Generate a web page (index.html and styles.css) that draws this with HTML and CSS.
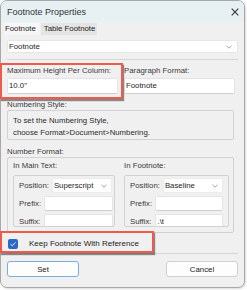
FILE: index.html
```html
<!DOCTYPE html>
<html>
<head>
<meta charset="utf-8">
<link rel="stylesheet" href="styles.css">
</head>
<body>
<div class="stage">
  <div class="dialog">
    <div class="titlebar">
      <span class="title">Footnote Properties</span>
      <svg class="close" width="8" height="8" viewBox="0 0 8 8"><path d="M0.7 0.7 L7.3 7.3 M7.3 0.7 L0.7 7.3" stroke="#3c3c3c" stroke-width="1.2" fill="none"/></svg>
    </div>
    <div class="tabs">
      <span class="tab active">Footnote</span>
      <span class="tab">Table Footnote</span>
    </div>
    <div class="content">
      <div class="select top-select">
        <span>Footnote</span>
        <svg class="chev" width="6" height="4" viewBox="0 0 6 4"><path d="M0.5 0.8 L3 3.2 L5.5 0.8" stroke="#8a8a8a" stroke-width="0.8" fill="none"/></svg>
      </div>
      <div class="sep"></div>
      <div class="two-col">
        <div class="field">
          <div class="label">Maximum Height Per Column:</div>
          <div class="input tall">10.0"</div>
        </div>
        <div class="field">
          <div class="label">Paragraph Format:</div>
          <div class="input tall">Footnote</div>
        </div>
      </div>
      <div class="label numbering-label">Numbering Style:</div>
      <div class="note-box">To set the Numbering Style,<br>choose Format&gt;Document&gt;Numbering.</div>
      <div class="label format-label">Number Format:</div>
      <div class="group">
        <div class="col">
          <div class="label">In Main Text:</div>
          <div class="inner inner-left">
            <div class="row"><span class="rlabel">Position:</span><div class="select small-select"><span>Superscript</span><svg class="chev" width="6" height="4" viewBox="0 0 6 4"><path d="M0.5 0.8 L3 3.2 L5.5 0.8" stroke="#8a8a8a" stroke-width="0.8" fill="none"/></svg></div></div>
            <div class="row"><span class="rlabel">Prefix:</span><div class="input small"></div></div>
            <div class="row"><span class="rlabel">Suffix:</span><div class="input small"></div></div>
          </div>
        </div>
        <div class="col">
          <div class="label">In Footnote:</div>
          <div class="inner inner-right">
            <div class="row"><span class="rlabel">Position:</span><div class="select small-select"><span>Baseline</span><svg class="chev" width="6" height="4" viewBox="0 0 6 4"><path d="M0.5 0.8 L3 3.2 L5.5 0.8" stroke="#8a8a8a" stroke-width="0.8" fill="none"/></svg></div></div>
            <div class="row"><span class="rlabel">Prefix:</span><div class="input small"></div></div>
            <div class="row"><span class="rlabel">Suffix:</span><div class="input small">.\t</div></div>
          </div>
        </div>
      </div>
      <div class="check-row">
        <span class="checkbox"><svg width="8" height="8" viewBox="0 0 8 8"><path d="M1.6 4.2 L3.3 5.8 L6.4 2.4" stroke="#ffffff" stroke-width="0.9" fill="none"/></svg></span>
        <span>Keep Footnote With Reference</span>
      </div>
      <div class="sep sep-bottom"></div>
      <div class="buttons">
        <button class="btn default">Set</button>
        <button class="btn">Cancel</button>
      </div>
    </div>
  </div>
  <div class="callout callout-height"></div>
  <div class="callout callout-keep"></div>
</div>
</body>
</html>
```
FILE: styles.css
```css
* { box-sizing: border-box; }
html, body { margin: 0; padding: 0; background: #ffffff; }
body {
  font-family: "Liberation Sans", Arial, sans-serif;
  font-size: 7.8px;
  color: #2b2b2b;
  width: 247px;
  height: 290px;
  overflow: hidden;
}
.stage { position: relative; width: 247px; height: 290px; }
.dialog {
  width: 245px;
  height: 288px;
  border: 1px solid #a9a9a9;
  border-radius: 7px;
  background: #f0f0f0;
  overflow: hidden;
  box-shadow: 1px 1px 2px rgba(0,0,0,0.15);
}
.titlebar {
  height: 21px;
  background: #e7f1f4;
  display: flex;
  align-items: center;
  justify-content: space-between;
  padding: 0 5px 0 6px;
}
.title { font-size: 9px; color: #333; }
.close { display: block; }
.tabs {
  display: flex;
  height: 12px;
  margin-top: 1px;
  padding-left: 3px;
}
.tab { line-height: 12px; color: #222; }
.tab.active { background: #f6f6f6; padding: 0 4px 0 1px; }
.tab:not(.active) { background: #e4e4e4; padding: 0 2px 0 3px; margin-left: 1px; }
.content { padding: 0 6px; }
.select {
  background: #fff;
  border: 1px solid #e6e6e6;
  border-radius: 2px;
  display: flex;
  align-items: center;
  justify-content: space-between;
  color: #1e1e1e;
}
.chev { display: block; }
.top-select { margin-top: 5px; height: 13px; padding: 0 5px 0 1px; }
.sep { height: 1px; background: #d6d6d6; margin-top: 6px; }
.label { line-height: 10px; color: #3a3a3a; white-space: nowrap; }
.two-col {
  display: grid;
  grid-template-columns: 111px 111px;
  column-gap: 6px;
  margin-top: 6px;
}
.input {
  background: #fff;
  border: 1px solid #e4e4e4;
  border-bottom-color: #cfcfcf;
  border-radius: 2px;
  color: #1e1e1e;
}
.input.tall { height: 16px; margin-top: 2px; line-height: 14px; padding-left: 1px; }
.numbering-label { margin-top: 6px; }
.note-box {
  width: 227px;
  border: 1px solid #d2d2d2;
  border-radius: 2px;
  padding: 4px 5px 0 5px;
  line-height: 12px;
  height: 30px;
  color: #2b2b2b;
}
.format-label { margin-top: 7px; }
.group {
  width: 227px;
  height: 76px;
  border: 1px solid #d2d2d2;
  border-radius: 2px;
  padding: 3px 4px 5px 5px;
  display: grid;
  grid-template-columns: 102px 105px;
  column-gap: 9px;
}
.inner {
  margin-top: 4px;
  height: 52px;
  border: 1px solid #d2d2d2;
  border-radius: 2px;
  padding: 2px 1px 0 5px;
  overflow: hidden;
  display: flex;
  flex-direction: column;
  gap: 3px;
}
.inner-right { padding-right: 5px; }
.row { display: flex; align-items: center; gap: 3px; height: 15px; flex: none; }
.rlabel { color: #3a3a3a; white-space: nowrap; }
.small-select { flex: 1; height: 15px; padding: 0 4px 0 1px; border-color: #ececec; }
.inner-left .small-select { margin-right: 1px; }
.input.small { flex: 1; height: 15px; line-height: 13px; padding-left: 2px; }
.check-row {
  display: flex;
  align-items: center;
  height: 11px;
  margin-top: 5px;
  padding-left: 1px;
  gap: 11px;
  font-size: 8px;
  color: #222;
}
.checkbox {
  width: 10px;
  height: 10px;
  border-radius: 2px;
  background: #2a6ac4;
  display: flex;
  align-items: center;
  justify-content: center;
}
.checkbox svg { display: block; }
.sep-bottom { margin-top: 4px; }
.buttons {
  display: flex;
  justify-content: space-between;
  margin-top: 7px;
}
.btn {
  width: 72px;
  height: 16px;
  background: #fdfdfd;
  border: 1px solid #d0d0d0;
  border-radius: 3px;
  font-family: "Liberation Sans", Arial, sans-serif;
  font-size: 7.8px;
  color: #222;
  padding: 0;
}
.btn.default { border-color: #7aaee0; }
.callout {
  position: absolute;
  border: 2px solid #ef5a4b;
  box-shadow: 1px 2px 1px rgba(50,50,50,0.55);
}
.callout-height { left: 0; top: 63px; width: 123px; height: 36px; }
.callout-keep { left: 0; top: 231px; width: 154px; height: 22px; }
```
